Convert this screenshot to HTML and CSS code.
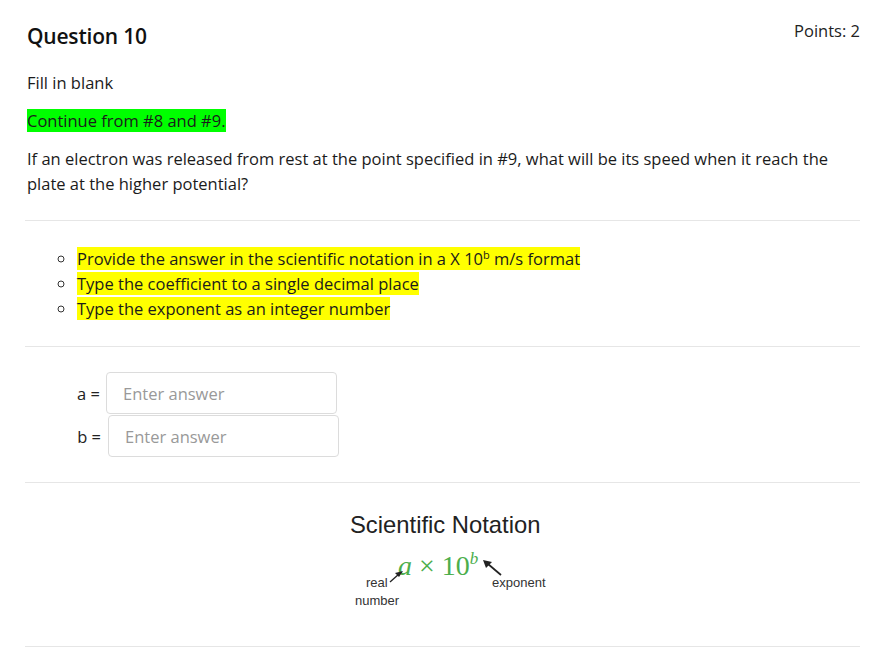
FILE: index.html
```html
<!DOCTYPE html>
<html>
<head>
<meta charset="utf-8">
<link rel="stylesheet" href="styles.css">
</head>
<body>
<div class="question">
  <div class="header">
    <h2 class="title">Question 10</h2>
    <div class="points">Points: 2</div>
  </div>
  <p class="type">Fill in blank</p>
  <p class="p"><span class="hl-green">Continue from #8 and #9.</span></p>
  <p class="p">If an electron was released from rest at the point specified in #9, what will be its speed when it reach the plate at the higher potential?</p>
  <hr class="rule">
  <ul class="rules-list">
    <li><span class="hl-yellow">Provide the answer in the scientific notation in a X 10<sup class="sup">b</sup> m/s format</span></li>
    <li><span class="hl-yellow">Type the coefficient to a single decimal place</span></li>
    <li><span class="hl-yellow">Type the exponent as an integer number</span></li>
  </ul>
  <hr class="rule rule-wide">
  <div class="answers">
    <div class="answer-row">
      <span class="label">a =</span>
      <input class="input" type="text" placeholder="Enter answer">
    </div>
    <div class="answer-row row-b">
      <span class="label">b =</span>
      <input class="input" type="text" placeholder="Enter answer">
    </div>
  </div>
  <hr class="rule rule-wide">
  <div class="figure">
    <div class="fig-title">Scientific Notation</div>
    <div class="fig-formula"><i>a</i> × 10<sup class="fig-sup"><i>b</i></sup></div>
    <div class="fig-label fig-real">real</div>
    <div class="fig-label fig-number">number</div>
    <div class="fig-label fig-exp">exponent</div>
    <svg class="fig-arrows" width="220" height="120" viewBox="0 0 220 120">
      <line x1="53" y1="84" x2="62" y2="76" stroke="#222" stroke-width="1.3"/>
      <polygon points="66,73 58,75 62,79" fill="#222"/>
      <line x1="164" y1="77" x2="151" y2="66" stroke="#222" stroke-width="1.7"/>
      <polygon points="146,62 149,70 155,64" fill="#222"/>
    </svg>
  </div>
  <hr class="rule last">
</div>
</body>
</html>
```
FILE: styles.css
```css
html, body {
  margin: 0;
  padding: 0;
  background: #ffffff;
}
body {
  font-family: "Open Sans", "Noto Sans", sans-serif;
  font-size: 16.5px;
  color: #1b1b1b;
}
.question {
  margin-left: 25px;
  width: 835px;
}
.header {
  display: flex;
  justify-content: space-between;
  align-items: flex-start;
  padding-top: 21px;
}
.title {
  margin: 0 0 0 2px;
  font-size: 21px;
  font-weight: 600;
  line-height: 30px;
  color: #111;
  letter-spacing: -0.2px;
}
.points {
  line-height: 24px;
  margin-top: -2px;
  color: #222;
}
.type {
  margin: 19px 0 0 2px;
  line-height: 25px;
}
.p {
  margin: 13px 0 0 2px;
  line-height: 25px;
}
.hl-green {
  background: #00ff00;
}
.hl-yellow {
  background: #ffff00;
}
.rule {
  border: 0;
  border-top: 1px solid #e6e6e6;
  margin: 24px 0 0 0;
  height: 0;
}
.rule-wide {
  margin-top: 25px;
}
.rules-list {
  margin: 25px 0 0 0;
  padding-left: 52px;
  list-style: circle;
  line-height: 25px;
}
.rules-list li::marker {
  color: #333;
}
.sup {
  font-size: 11px;
  line-height: 0;
  vertical-align: 6px;
}
.answers {
  margin-top: 25px;
  padding-left: 50px;
}
.answer-row {
  display: flex;
  align-items: center;
  gap: 6px;
}
.row-b {
  margin-top: 1px;
  padding-left: 1px;
}
.label {
  width: 25px;
  text-align: right;
  color: #222;
}
.row-b .input {
  margin-left: 1px;
}
.input {
  box-sizing: border-box;
  width: 231px;
  height: 42px;
  border: 1px solid #dcdcdc;
  border-radius: 4px;
  padding: 0 16px;
  font-family: inherit;
  font-size: 16.5px;
  color: #222;
  outline: none;
}
.input::placeholder {
  color: #999;
}
.figure {
  position: relative;
  width: 220px;
  height: 120px;
  margin: 15px 0 0 312px;
  font-family: "Liberation Sans", Arial, sans-serif;
}
.fig-title {
  position: absolute;
  left: 13px;
  top: 13px;
  font-size: 23.8px;
  line-height: 28px;
  color: #222;
  white-space: nowrap;
}
.fig-formula {
  position: absolute;
  left: 61px;
  top: 53px;
  font-family: "Liberation Serif", "Times New Roman", serif;
  font-size: 28px;
  line-height: 30px;
  color: #4cae4c;
  white-space: nowrap;
}
.fig-sup {
  font-size: 17px;
  line-height: 0;
  vertical-align: 11px;
}
.fig-label {
  position: absolute;
  font-size: 13px;
  line-height: 14px;
  color: #333;
  white-space: nowrap;
}
.fig-real {
  left: 29px;
  top: 78px;
}
.fig-number {
  left: 18px;
  top: 96px;
}
.fig-exp {
  left: 155px;
  top: 78px;
}
.fig-arrows {
  position: absolute;
  left: 0;
  top: 0;
}
.last {
  margin-top: 28px;
}
```
